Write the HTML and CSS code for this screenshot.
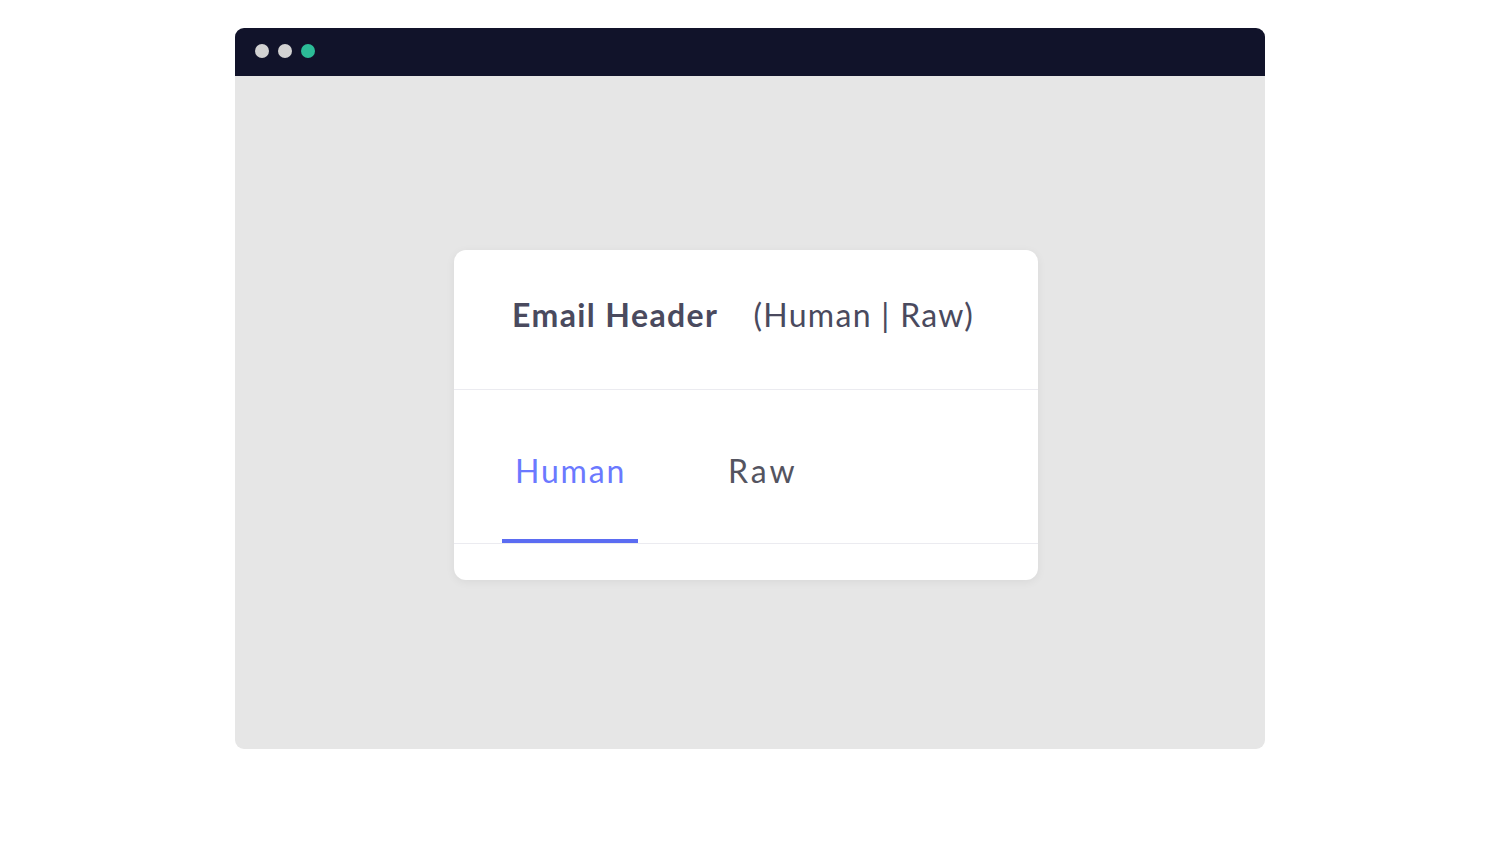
FILE: index.html
```html
<!DOCTYPE html>
<html>
<head>
<meta charset="utf-8">
<link rel="stylesheet" href="styles.css">
</head>
<body>
<div class="stage">
  <div class="window">
    <div class="titlebar">
      <span class="dot gray"></span>
      <span class="dot gray"></span>
      <span class="dot green"></span>
    </div>
    <div class="content">
      <div class="card">
        <div class="card-head">
          <span class="title">Email Header</span>
          <span class="subtitle">(Human | Raw)</span>
        </div>
        <div class="tabs">
          <div class="tab active">Human</div>
          <div class="tab raw">Raw</div>
        </div>
      </div>
    </div>
  </div>
</div>
</body>
</html>
```

FILE: styles.css
```css
html, body {
  margin: 0;
  padding: 0;
  background: #ffffff;
  font-family: Lato, "Open Sans", "Liberation Sans", sans-serif;
}
.stage {
  width: 1500px;
  height: 842px;
  padding-top: 28px;
  box-sizing: border-box;
}
.window {
  width: 1030px;
  margin-left: 235px;
  border-radius: 9px;
  overflow: hidden;
  background: #e6e6e6;
}
.titlebar {
  height: 48px;
  background: #11132a;
  display: flex;
  align-items: center;
  padding-left: 20px;
  padding-bottom: 2px;
  box-sizing: border-box;
  gap: 9px;
}
.dot {
  width: 14px;
  height: 14px;
  border-radius: 50%;
}
.dot.gray { background: #d2d2d2; }
.dot.green { background: #2cbc97; }
.content {
  height: 673px;
  padding-top: 174px;
  padding-left: 219px;
  box-sizing: border-box;
}
.card {
  width: 584px;
  height: 330px;
  background: #ffffff;
  border-radius: 12px;
  box-shadow: 0 2px 10px rgba(0,0,0,0.06);
  box-sizing: border-box;
}
.card-head {
  height: 140px;
  border-bottom: 1px solid #ebebf0;
  display: flex;
  align-items: center;
  padding-left: 58px;
  padding-bottom: 10px;
  box-sizing: border-box;
  color: #4a4a5e;
  font-size: 32px;
}
.title {
  font-weight: 700;
  letter-spacing: 1.4px;
}
.subtitle {
  margin-left: 35px;
  font-weight: 400;
  letter-spacing: 1.3px;
}
.tabs {
  height: 154px;
  display: flex;
  padding-left: 48px;
  border-bottom: 1px solid #ebebf0;
  box-sizing: border-box;
}
.tab {
  font-size: 32px;
  color: #545460;
  padding: 61px 14px 0 13px;
  letter-spacing: 1.8px;
  margin-right: 77px;
  box-sizing: border-box;
}
.tab.raw {
  letter-spacing: 3px;
}
.tab.active {
  color: #6b79ff;
  border-bottom: 4px solid #5b6cf2;
  width: 136px;
}
```
